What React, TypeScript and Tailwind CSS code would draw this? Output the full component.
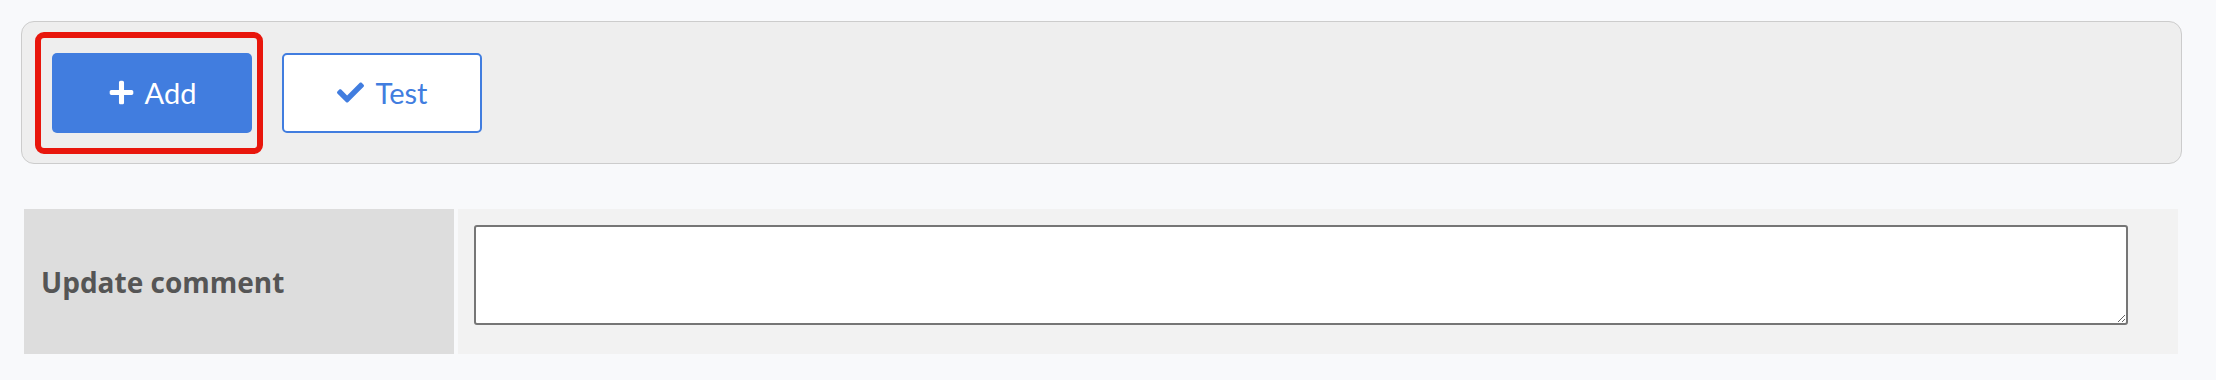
import { FaPlus, FaCheck } from "react-icons/fa";

export default function App() {
    return (
        <div
            className="min-h-[380px] w-[2216px] bg-[#f8f9fb] pl-[21px] pr-[34px] pt-[21px]"
            style={{ fontFamily: "Lato, 'Open Sans', sans-serif" }}>
            <div className="flex h-[143px] items-center gap-[19px] rounded-[13px] border-[1.5px] border-[#cccccc] bg-[#eeeeee] pl-[13px]">
                <div className="flex h-[122px] items-center rounded-[9px] border-[6px] border-[#e8160c] pl-[11px] pr-[5px]">
                    <button className="flex h-[80px] w-[200px] items-center justify-center gap-[10px] rounded-[5px] bg-[#417ddf] text-[29px] text-white">
                        <FaPlus className="size-[27px]" />
                        <span>Add</span>
                    </button>
                </div>
                <button className="flex h-[80px] w-[200px] items-center justify-center gap-[12px] rounded-[5px] border-2 border-[#417ddf] bg-white text-[29px] text-[#417ddf]">
                    <FaCheck className="size-[27px]" />
                    <span>Test</span>
                </button>
            </div>
            <div className="ml-[3px] mr-[4px] mt-[45px] flex h-[145px] gap-[4px]">
                <div className="flex w-[430px] items-center bg-[#dddddd] pl-[17px]">
                    <span className="font-['Open_Sans',sans-serif] text-[28px] font-bold text-[#555555]">Update comment</span>
                </div>
                <div className="flex-1 bg-[#f2f2f2] pb-[29px] pl-[16px] pr-[50px] pt-[16px]">
                    <textarea className="block h-[100px] w-full rounded-[3px] border-2 border-[#767676] bg-white" />
                </div>
            </div>
        </div>
    );
}
